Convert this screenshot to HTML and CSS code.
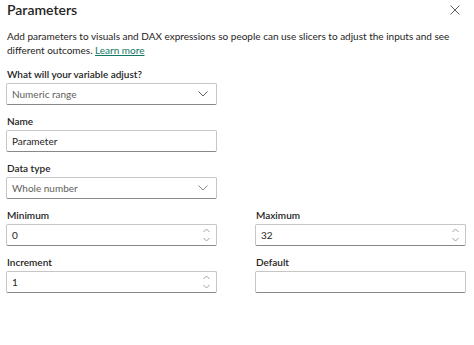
FILE: index.html
```html
<!DOCTYPE html>
<html lang="en">
<head>
    <meta charset="UTF-8">
    <meta name="viewport" content="width=device-width, initial-scale=1.0">
    <title>Parameters</title>
    <link rel="stylesheet" href="styles.css">
</head>
<body>
    <div class="panel">
        <div class="panel-header">
            <h1>Parameters</h1>
            <button class="close-btn" aria-label="Close">
                <svg width="10" height="10" viewBox="0 0 10 10"><path d="M0.5 0.5 L9.5 9.5 M9.5 0.5 L0.5 9.5" stroke="#605e5c" stroke-width="1" fill="none"/></svg>
            </button>
        </div>
        <p class="description">Add parameters to visuals and DAX expressions so people can use slicers to adjust the inputs and see different outcomes. <a href="#">Learn more</a></p>

        <div class="field half">
            <label>What will your variable adjust?</label>
            <div class="control select">
                <span class="value muted">Numeric range</span>
                <svg class="chevron" width="10" height="6" viewBox="0 0 10 6"><path d="M0.5 0.5 L5 5 L9.5 0.5" stroke="#605e5c" stroke-width="1" fill="none"/></svg>
            </div>
        </div>

        <div class="field half">
            <label>Name</label>
            <div class="control">
                <span class="value">Parameter</span>
            </div>
        </div>

        <div class="field half">
            <label>Data type</label>
            <div class="control select">
                <span class="value muted">Whole number</span>
                <svg class="chevron" width="10" height="6" viewBox="0 0 10 6"><path d="M0.5 0.5 L5 5 L9.5 0.5" stroke="#8a8886" stroke-width="1" fill="none"/></svg>
            </div>
        </div>

        <div class="field-grid">
            <div class="field">
                <label>Minimum</label>
                <div class="control">
                    <span class="value">0</span>
                    <span class="spinner"><svg width="7" height="14" viewBox="0 0 7 14"><path d="M0.5 4 L3.5 1 L6.5 4 M0.5 10 L3.5 13 L6.5 10" stroke="#a19f9d" stroke-width="1" fill="none"/></svg></span>
                </div>
            </div>
            <div class="field">
                <label>Maximum</label>
                <div class="control">
                    <span class="value">32</span>
                    <span class="spinner"><svg width="7" height="14" viewBox="0 0 7 14"><path d="M0.5 4 L3.5 1 L6.5 4 M0.5 10 L3.5 13 L6.5 10" stroke="#a19f9d" stroke-width="1" fill="none"/></svg></span>
                </div>
            </div>
            <div class="field">
                <label>Increment</label>
                <div class="control">
                    <span class="value">1</span>
                    <span class="spinner"><svg width="7" height="14" viewBox="0 0 7 14"><path d="M0.5 4 L3.5 1 L6.5 4 M0.5 10 L3.5 13 L6.5 10" stroke="#a19f9d" stroke-width="1" fill="none"/></svg></span>
                </div>
            </div>
            <div class="field">
                <label>Default</label>
                <div class="control">
                    <span class="value"></span>
                </div>
            </div>
        </div>
    </div>
</body>
</html>
```

FILE: styles.css
```css
body {
    margin: 0;
    background-color: #fff;
    color: #252423;
    font-family: Lato, "Open Sans", Arial, sans-serif;
    font-size: 10px;
}
.panel {
    padding: 0 8px 0 6px;
}
.panel-header {
    display: flex;
    align-items: center;
    justify-content: space-between;
    height: 20px;
}
.panel-header h1 {
    margin: 0 0 0 1px;
    font-size: 14px;
    font-weight: 600;
    line-height: 20px;
}
.close-btn {
    border: none;
    background: none;
    padding: 0;
    margin-right: 6px;
    display: flex;
}
.description {
    margin: 10px 0 0 1px;
    line-height: 13.5px;
}
.description a {
    color: #117865;
}
.field {
    display: flex;
    flex-direction: column;
    margin-top: 10px;
}
.field + .field {
    margin-top: 9px;
}
.field.half {
    width: 211px;
}
.field label {
    font-weight: 600;
    line-height: 14px;
    margin-bottom: 2px;
    margin-left: 1px;
}
.control {
    display: flex;
    align-items: center;
    height: 22px;
    box-sizing: border-box;
    border: 1px solid #c8c6c4;
    border-bottom-color: #8a8886;
    border-radius: 2px;
    padding: 0 6px 0 5px;
}
.value {
    flex: 1;
}
.value.muted {
    color: #605e5c;
}
.chevron {
    margin-right: 2px;
}
.spinner {
    display: flex;
}
.field-grid {
    display: grid;
    grid-template-columns: 211px 211px;
    column-gap: 38px;
    margin-top: 9px;
}
.field-grid .field {
    margin-top: 0;
}
.field-grid .field:nth-child(n+3) {
    margin-top: 9px;
}
```
